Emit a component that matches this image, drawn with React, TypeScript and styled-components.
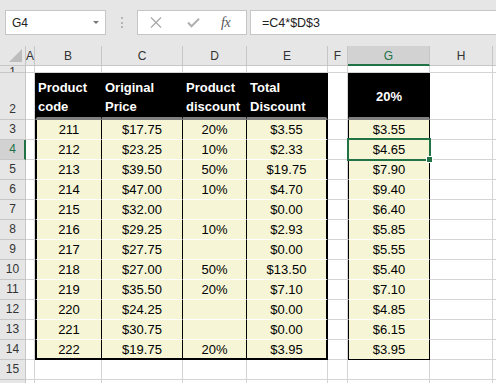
import React from 'react';
import styled, { createGlobalStyle, css } from 'styled-components';

const GlobalStyle = createGlobalStyle`
  html, body {
    margin: 0;
    padding: 0;
    background: #fff;
  }
  body {
    font-family: 'Liberation Sans', Arial, sans-serif;
  }
`;

const GRID = '#d4d4d4';
const CHROME = '#e6e6e6';
const CHROME_LINE = '#c6c6c6';
const SELECT = '#217346';
const CREAM = '#f6f6d6';

const THICK = '2px solid #000';
const THIN_BLACK = '1px solid #000';
const HEAD_RULE = '3px solid #808080';
const ROW_RULE = '1px solid #fff';

const COLS = [
  { key: 'A', width: 9 },
  { key: 'B', width: 67 },
  { key: 'C', width: 81 },
  { key: 'D', width: 64 },
  { key: 'E', width: 81 },
  { key: 'F', width: 20 },
  { key: 'G', width: 82 },
  { key: 'H', width: 63 },
  { key: 'I', width: 80 },
];

const HEADINGS: Record<string, [string, string]> = {
  B: ['Product', 'code'],
  C: ['Original', 'Price'],
  D: ['Product', 'discount'],
  E: ['Total', 'Discount'],
};

// code, original price, product discount, total discount, G column
const DATA: string[][] = [
  ['211', '$17.75', '20%', '$3.55', '$3.55'],
  ['212', '$23.25', '10%', '$2.33', '$4.65'],
  ['213', '$39.50', '50%', '$19.75', '$7.90'],
  ['214', '$47.00', '10%', '$4.70', '$9.40'],
  ['215', '$32.00', '', '$0.00', '$6.40'],
  ['216', '$29.25', '10%', '$2.93', '$5.85'],
  ['217', '$27.75', '', '$0.00', '$5.55'],
  ['218', '$27.00', '50%', '$13.50', '$5.40'],
  ['219', '$35.50', '20%', '$7.10', '$7.10'],
  ['220', '$24.25', '', '$0.00', '$4.85'],
  ['221', '$30.75', '', '$0.00', '$6.15'],
  ['222', '$19.75', '20%', '$3.95', '$3.95'],
];

const ROW_HEIGHTS: Record<number, number> = { 1: 7, 2: 47 };
const ROWS = Array.from({ length: 16 }, (_, i) => i + 1);

const SELECTED_ROW = 4;
const SELECTED_COL = 'G';

/* ---------- formula bar ---------- */

const Screen = styled.div`
  width: 496px;
  height: 383px;
  overflow: hidden;
  background: #fff;
`;

const TopBar = styled.div`
  display: flex;
  align-items: flex-start;
  box-sizing: border-box;
  height: 46px;
  padding: 10px 0 0 5px;
  background: ${CHROME};
`;

const Box = styled.div`
  box-sizing: border-box;
  height: 25px;
  background: #fff;
  border: 1px solid ${CHROME_LINE};
  display: flex;
  align-items: center;
`;

const NameBox = styled(Box)`
  width: 101px;
  justify-content: space-between;
  padding: 0 6px 0 6px;
  font-size: 12px;
  color: #222;
`;

const Caret = styled.span`
  width: 0;
  height: 0;
  border-left: 3.5px solid transparent;
  border-right: 3.5px solid transparent;
  border-top: 3.5px solid #777;
`;

const Grip = styled.div`
  display: flex;
  flex-direction: column;
  gap: 2.5px;
  margin: 7px 14px 0 15px;

  span {
    width: 2px;
    height: 2px;
    background: #b5b5b5;
  }
`;

const IconBox = styled(Box)`
  width: 110px;
  padding-left: 12px;
  gap: 0;
`;

const IconSlot = styled.span<{ $w: number }>`
  display: flex;
  width: ${({ $w }) => $w}px;
`;

const Fx = styled.span`
  font-family: 'Liberation Serif', 'Times New Roman', serif;
  font-style: italic;
  font-size: 14px;
  color: #555;
  letter-spacing: -0.5px;
`;

const FormulaBox = styled(Box)`
  flex: 1;
  margin-left: 3px;
  border-right: none;
  padding-left: 11px;
  font-size: 12.5px;
  color: #222;
`;

/* ---------- sheet ---------- */

const SheetRow = styled.div<{ $h: number }>`
  display: flex;
  height: ${({ $h }) => $h}px;
`;

const Corner = styled.div`
  box-sizing: border-box;
  flex: 0 0 26px;
  height: 100%;
  background: ${CHROME};
  border-right: 1px solid ${CHROME_LINE};
  border-bottom: 1px solid ${CHROME_LINE};
  display: flex;
  align-items: flex-end;
  justify-content: flex-end;
  padding: 0 3px 3px 0;
`;

const ColHeader = styled.div<{ $w: number; $selected?: boolean }>`
  box-sizing: border-box;
  flex: 0 0 ${({ $w }) => $w}px;
  height: 100%;
  background: ${({ $selected }) => ($selected ? '#d2d2d2' : CHROME)};
  border-right: 1px solid ${CHROME_LINE};
  border-bottom: ${({ $selected }) => ($selected ? `2px solid ${SELECT}` : `1px solid ${CHROME_LINE}`)};
  display: flex;
  align-items: center;
  justify-content: center;
  font-size: 12px;
  color: ${({ $selected }) => ($selected ? SELECT : '#333')};
  padding-top: ${({ $selected }) => ($selected ? '1px' : '0')};
  overflow: visible;
`;

const RowHeader = styled.div<{ $selected?: boolean; $short?: boolean }>`
  box-sizing: border-box;
  flex: 0 0 26px;
  height: 100%;
  overflow: hidden;
  background: ${({ $selected }) => ($selected ? '#d2d2d2' : CHROME)};
  border-right: ${({ $selected }) => ($selected ? `2px solid ${SELECT}` : `1px solid ${CHROME_LINE}`)};
  border-bottom: 1px solid ${CHROME_LINE};
  display: flex;
  justify-content: center;
  align-items: ${({ $short }) => ($short ? 'flex-start' : 'flex-end')};
  font-size: 12px;
  line-height: 20px;
  color: ${({ $selected }) => ($selected ? SELECT : '#333')};

  span {
    margin-top: ${({ $short }) => ($short ? '-4px' : '0')};
    margin-left: ${({ $selected }) => ($selected ? '1px' : '0')};
  }
`;

type Variant = 'blank' | 'head' | 'headCenter' | 'data';

const variants: Record<Variant, ReturnType<typeof css>> = {
  blank: css``,
  head: css`
    background: #000;
    color: #fff;
    font-weight: bold;
    flex-direction: column;
    justify-content: flex-end;
    align-items: flex-start;
    padding: 0 0 1px 3px;
    line-height: 19px;
  `,
  headCenter: css`
    background: #000;
    color: #fff;
    font-weight: bold;
    padding-top: 3px;
  `,
  data: css`
    background: ${CREAM};
  `,
};

interface CellProps {
  $w: number;
  $variant: Variant;
  $left?: string;
  $right?: string;
  $bottom?: string;
  $selected?: boolean;
}

const Cell = styled.div<CellProps>`
  box-sizing: border-box;
  flex: 0 0 ${({ $w }) => $w}px;
  height: 100%;
  border-left: ${({ $left }) => $left ?? 'none'};
  border-right: ${({ $right }) => $right ?? `1px solid ${GRID}`};
  border-bottom: ${({ $bottom }) => $bottom ?? `1px solid ${GRID}`};
  display: flex;
  align-items: center;
  justify-content: center;
  font-size: 13px;
  color: #000;
  white-space: nowrap;
  ${({ $variant }) => variants[$variant]};

  ${({ $selected }) =>
    $selected &&
    css`
      position: relative;
      z-index: 2;

      &::after {
        content: '';
        position: absolute;
        top: -2px;
        left: -2px;
        right: -2px;
        bottom: -2px;
        border: 2px solid ${SELECT};
      }

      &::before {
        content: '';
        position: absolute;
        right: -4px;
        bottom: -4px;
        width: 5px;
        height: 5px;
        background: ${SELECT};
        border: 1px solid #fff;
        z-index: 3;
      }
    `}
`;

const CornerMark = () => (
  <svg width="13" height="13" viewBox="0 0 13 13">
    <polygon points="13,0 13,13 0,13" fill="#bdbdbd" />
  </svg>
);

const CancelIcon = () => (
  <svg width="12" height="11" viewBox="0 0 12 11">
    <path d="M1 0.5 L11 10.5 M11 0.5 L1 10.5" stroke="#a8a8a8" strokeWidth="1.2" fill="none" />
  </svg>
);

const EnterIcon = () => (
  <svg width="13" height="10" viewBox="0 0 13 10">
    <path d="M1 4.5 L4.5 8.2 L12 0.8" stroke="#b0b0b0" strokeWidth="2" fill="none" />
  </svg>
);

function tableCell(col: string, row: number, index: number) {
  const isFirst = col === 'B';
  const isLast = col === 'E';
  const borders = {
    $left: isFirst ? THICK : undefined,
    $right: isLast ? THICK : THIN_BLACK,
    $bottom: row === 2 ? HEAD_RULE : row === 14 ? THICK : ROW_RULE,
  };
  if (row === 2) {
    const [a, b] = HEADINGS[col];
    return (
      <Cell key={col} $w={COLS[index].width} $variant="head" {...borders} style={isFirst ? { paddingLeft: 1 } : undefined}>
        <span>{a}</span>
        <span>{b}</span>
      </Cell>
    );
  }
  const value = DATA[row - 3][index - 1];
  return (
    <Cell key={col} $w={COLS[index].width} $variant="data" {...borders}>
      {value}
    </Cell>
  );
}

function sideCell(row: number, width: number) {
  const borders = {
    $left: THIN_BLACK,
    $right: THIN_BLACK,
    $bottom: row === 2 ? HEAD_RULE : row === 14 ? THIN_BLACK : ROW_RULE,
  };
  if (row === 2) {
    return (
      <Cell key="G" $w={width} $variant="headCenter" {...borders}>
        20%
      </Cell>
    );
  }
  return (
    <Cell key="G" $w={width} $variant="data" {...borders} $selected={row === SELECTED_ROW}>
      {DATA[row - 3][4]}
    </Cell>
  );
}

function renderCell(col: string, width: number, row: number, index: number) {
  const inTable = row >= 2 && row <= 14;
  if (inTable && HEADINGS[col]) return tableCell(col, row, index);
  if (inTable && col === 'G') return sideCell(row, width);
  return <Cell key={col} $w={width} $variant="blank" />;
}

const App = () => (
  <Screen>
    <GlobalStyle />
    <TopBar>
      <NameBox>
        <span>G4</span>
        <Caret />
      </NameBox>
      <Grip>
        <span />
        <span />
        <span />
      </Grip>
      <IconBox>
        <IconSlot $w={37}>
          <CancelIcon />
        </IconSlot>
        <IconSlot $w={34}>
          <EnterIcon />
        </IconSlot>
        <Fx>fx</Fx>
      </IconBox>
      <FormulaBox>=C4*$D$3</FormulaBox>
    </TopBar>

    <SheetRow $h={20}>
      <Corner>
        <CornerMark />
      </Corner>
      {COLS.map((c) => (
        <ColHeader key={c.key} $w={c.width} $selected={c.key === SELECTED_COL}>
          {c.key}
        </ColHeader>
      ))}
    </SheetRow>

    {ROWS.map((row) => (
      <SheetRow key={row} $h={ROW_HEIGHTS[row] ?? 20}>
        <RowHeader $selected={row === SELECTED_ROW} $short={row === 1}>
          <span>{row}</span>
        </RowHeader>
        {COLS.map((c, i) => renderCell(c.key, c.width, row, i))}
      </SheetRow>
    ))}
  </Screen>
);

export default App;
